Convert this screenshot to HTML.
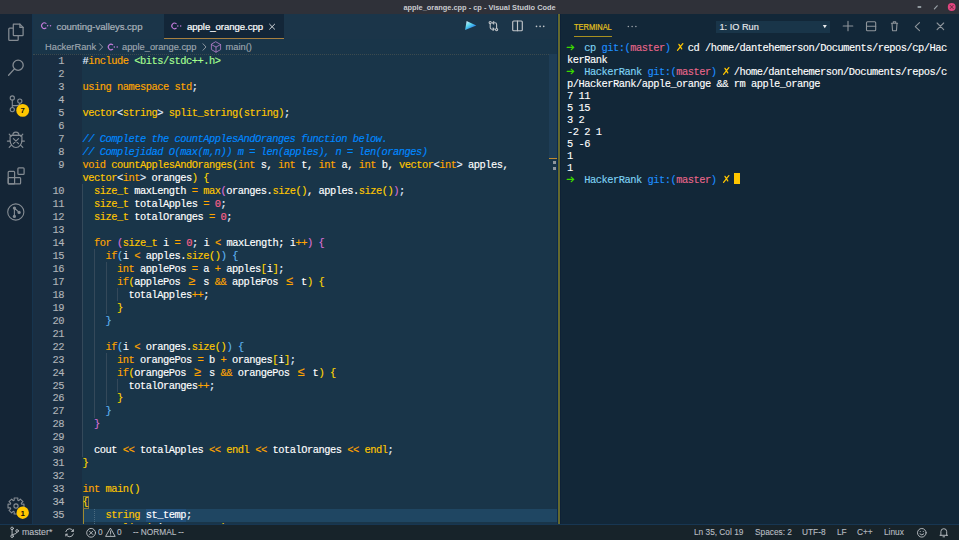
<!DOCTYPE html>
<html><head><meta charset="utf-8"><style>
*{margin:0;padding:0;box-sizing:border-box}
html,body{width:959px;height:540px;overflow:hidden;background:#193549}
body{position:relative;font-family:"Liberation Sans",sans-serif}
.abs{position:absolute}
#title{left:0;top:0;width:959px;height:14px;background:#2F3139}
#titletxt{left:0;top:0;width:959px;height:14px;text-align:center;color:#C9CBCF;font-size:7.4px;font-weight:bold;line-height:16px}
#act{left:0;top:14px;width:32px;height:510px;background:#142536;box-shadow:1px 0 0 #16344E}
#gutter{left:33px;top:54px;width:49px;height:470px;background:#192E42}
#tabs{left:33px;top:14px;width:526px;height:25px;background:#1B3549}
.tab{top:14px;height:25px;color:#A9B2BA;font-size:9.6px;letter-spacing:-0.05px;line-height:25px;white-space:pre;-webkit-text-stroke:0.2px currentColor}
#tab2{left:164px;width:120px;background:#132638;color:#FFFFFF}
#tab2b{left:164px;top:38px;width:120px;height:1px;background:#A88040}
#bc{left:45px;top:40px;height:14px;color:#9EA7AF;font-size:9.3px;line-height:14px;white-space:pre;-webkit-text-stroke:0.15px currentColor}
.ln{position:absolute;left:33px;width:31px;text-align:right;height:13px;color:#B0B4B8;font-family:"Liberation Mono",monospace;font-size:10.4px;letter-spacing:-0.484px;line-height:13px;-webkit-text-stroke:0.15px #B0B4B8}
.cl{position:absolute;left:82.5px;height:13px;font-family:"Liberation Mono",monospace;font-size:10.4px;letter-spacing:-0.484px;line-height:13px;white-space:pre}
.cl span{-webkit-text-stroke:0.15px currentColor}
.cm{color:#0088FF;font-style:italic}
#term{left:560px;top:14px;width:399px;height:510px;background:#122738}
#tborder{left:558px;top:14px;width:2px;height:510px;background:#64692F;box-shadow:-1px 0 0 #0B2A4E,1px 0 0 #0E2136}
.tl{position:absolute;left:567px;height:12px;font-family:"Liberation Mono",monospace;font-size:10.4px;letter-spacing:-0.484px;line-height:12px;white-space:pre}
.tl span{-webkit-text-stroke:0.12px currentColor}
#status{left:0;top:524px;width:959px;height:16px;background:#17232A;border-top:1px solid #173652}
.st{top:524px;height:16px;line-height:17px;font-size:8.3px;color:#B9BEC3;white-space:pre;-webkit-text-stroke:0.1px currentColor}
</style></head><body>
<div id="title" class="abs"></div>
<div id="titletxt" class="abs">apple_orange.cpp - cp - Visual Studio Code</div>
<div id="act" class="abs"></div>
<div id="tabs" class="abs"></div>
<div id="tab2" class="abs tab"></div>
<div class="abs tab" style="left:56.5px">counting-valleys.cpp</div>
<div class="abs tab" style="left:187px;color:#fff">apple_orange.cpp</div>
<div id="tab2b" class="abs"></div>
<div id="bc" class="abs"><span class="abs" style="left:0">HackerRank</span><span class="abs" style="left:77px">apple_orange.cpp</span><span class="abs" style="left:180.5px">main()</span></div>
<div id="gutter" class="abs"></div>
<div class="abs" style="left:33px;top:54px;width:516px;height:1px;border-top:1px dotted #3b4a4e"></div>
<div class="abs" style="left:82.5px;top:508.51px;width:476px;height:13px;background:#1F4662"></div>
<div class="abs" style="left:145.8px;top:508.51px;width:40.3px;height:13px;background:#22507A"></div>
<div class="abs" style="left:82px;top:183.86px;width:1px;height:272.71999999999997px;background:#34495A;"></div><div class="abs" style="left:94px;top:248.79px;width:1px;height:168.83px;background:#34495A;"></div><div class="abs" style="left:106px;top:261.78px;width:1px;height:51.950000000000045px;background:#34495A;"></div><div class="abs" style="left:106px;top:352.68px;width:1px;height:51.95999999999998px;background:#34495A;"></div><div class="abs" style="left:117px;top:287.75px;width:1px;height:13.0px;background:#34495A;"></div><div class="abs" style="left:117px;top:378.65px;width:1px;height:13.0px;background:#34495A;"></div>
<div class="abs" style="left:82.5px;top:495.52px;width:6px;height:13px;border:1px solid #8a7a3a"></div>
<div class="abs" style="left:83px;top:508.51px;width:1px;height:15px;background:#A08A30"></div>
<div class="abs" style="left:94px;top:508.51px;width:0;height:15px;border-left:1px dotted #4a6a80"></div>
<div class="ln" style="top:54.85px">1</div>
<div class="cl" style="top:54.85px"><span style="color:#E1EFFF">#</span><span style="color:#FFA500">include</span><span style="color:#FFFFFF"> </span><span style="color:#A5FF90">&lt;bits/stdc++.h&gt;</span></div>
<div class="ln" style="top:67.83999999999999px">2</div>
<div class="cl" style="top:67.83999999999999px"></div>
<div class="ln" style="top:80.82px">3</div>
<div class="cl" style="top:80.82px"><span style="color:#FFA500">using</span><span style="color:#FFFFFF"> </span><span style="color:#FFA500">namespace</span><span style="color:#FFFFFF"> </span><span style="color:#FFA500">std</span><span style="color:#E1EFFF">;</span></div>
<div class="ln" style="top:93.80999999999999px">4</div>
<div class="cl" style="top:93.80999999999999px"></div>
<div class="ln" style="top:106.78999999999999px">5</div>
<div class="cl" style="top:106.78999999999999px"><span style="color:#FFC600">vector</span><span style="color:#E1EFFF">&lt;</span><span style="color:#FFC600">string</span><span style="color:#E1EFFF">&gt;</span><span style="color:#FFFFFF"> </span><span style="color:#FFC600">split_string</span><span style="color:#FFD700">(</span><span style="color:#FFC600">string</span><span style="color:#FFD700">)</span><span style="color:#E1EFFF">;</span></div>
<div class="ln" style="top:119.78px">6</div>
<div class="cl" style="top:119.78px"></div>
<div class="ln" style="top:132.76999999999998px">7</div>
<div class="cl" style="top:132.76999999999998px"><span class="cm">// Complete the countApplesAndOranges function below.</span></div>
<div class="ln" style="top:145.75px">8</div>
<div class="cl" style="top:145.75px"><span class="cm">// Complejidad O(max(m,n)) m = len(apples), n = len(oranges)</span></div>
<div class="ln" style="top:158.73999999999998px">9</div>
<div class="cl" style="top:158.73999999999998px"><span style="color:#FFA500">void</span><span style="color:#FFFFFF"> </span><span style="color:#FFC600">countApplesAndOranges</span><span style="color:#FFD700">(</span><span style="color:#FFA500">int</span><span style="color:#FFFFFF"> s, </span><span style="color:#FFA500">int</span><span style="color:#FFFFFF"> t, </span><span style="color:#FFA500">int</span><span style="color:#FFFFFF"> a, </span><span style="color:#FFA500">int</span><span style="color:#FFFFFF"> b, </span><span style="color:#FFC600">vector</span><span style="color:#E1EFFF">&lt;</span><span style="color:#FFA500">int</span><span style="color:#E1EFFF">&gt;</span><span style="color:#FFFFFF"> apples,</span></div>
<div class="cl" style="top:171.72px"><span style="color:#FFC600">vector</span><span style="color:#E1EFFF">&lt;</span><span style="color:#FFA500">int</span><span style="color:#E1EFFF">&gt;</span><span style="color:#FFFFFF"> oranges</span><span style="color:#FFD700">)</span><span style="color:#FFFFFF"> </span><span style="color:#FFD700">{</span></div>
<div class="ln" style="top:184.71px">10</div>
<div class="cl" style="top:184.71px"><span style="color:#FFFFFF">  </span><span style="color:#FFC600">size_t</span><span style="color:#FFFFFF"> maxLength </span><span style="color:#FFA500">=</span><span style="color:#FFFFFF"> </span><span style="color:#FFC600">max</span><span style="color:#DA70D6">(</span><span style="color:#FFFFFF">oranges.</span><span style="color:#FFC600">size</span><span style="color:#FFD700">()</span><span style="color:#FFFFFF">, apples.</span><span style="color:#FFC600">size</span><span style="color:#FFD700">()</span><span style="color:#DA70D6">)</span><span style="color:#E1EFFF">;</span></div>
<div class="ln" style="top:197.7px">11</div>
<div class="cl" style="top:197.7px"><span style="color:#FFFFFF">  </span><span style="color:#FFC600">size_t</span><span style="color:#FFFFFF"> totalApples </span><span style="color:#FFA500">=</span><span style="color:#FFFFFF"> </span><span style="color:#FF628C">0</span><span style="color:#E1EFFF">;</span></div>
<div class="ln" style="top:210.68px">12</div>
<div class="cl" style="top:210.68px"><span style="color:#FFFFFF">  </span><span style="color:#FFC600">size_t</span><span style="color:#FFFFFF"> totalOranges </span><span style="color:#FFA500">=</span><span style="color:#FFFFFF"> </span><span style="color:#FF628C">0</span><span style="color:#E1EFFF">;</span></div>
<div class="ln" style="top:223.67px">13</div>
<div class="cl" style="top:223.67px"></div>
<div class="ln" style="top:236.65px">14</div>
<div class="cl" style="top:236.65px"><span style="color:#FFFFFF">  </span><span style="color:#FFA500">for</span><span style="color:#FFFFFF"> </span><span style="color:#DA70D6">(</span><span style="color:#FFC600">size_t</span><span style="color:#FFFFFF"> i </span><span style="color:#FFA500">=</span><span style="color:#FFFFFF"> </span><span style="color:#FF628C">0</span><span style="color:#E1EFFF">;</span><span style="color:#FFFFFF"> i </span><span style="color:#FFA500">&lt;</span><span style="color:#FFFFFF"> maxLength; i</span><span style="color:#FFA500">++</span><span style="color:#DA70D6">)</span><span style="color:#FFFFFF"> </span><span style="color:#DA70D6">{</span></div>
<div class="ln" style="top:249.64px">15</div>
<div class="cl" style="top:249.64px"><span style="color:#FFFFFF">    </span><span style="color:#FFA500">if</span><span style="color:#5FB4F0">(</span><span style="color:#FFFFFF">i </span><span style="color:#FFA500">&lt;</span><span style="color:#FFFFFF"> apples.</span><span style="color:#FFC600">size</span><span style="color:#FFD700">()</span><span style="color:#5FB4F0">)</span><span style="color:#FFFFFF"> </span><span style="color:#5FB4F0">{</span></div>
<div class="ln" style="top:262.63px">16</div>
<div class="cl" style="top:262.63px"><span style="color:#FFFFFF">      </span><span style="color:#FFA500">int</span><span style="color:#FFFFFF"> applePos </span><span style="color:#FFA500">=</span><span style="color:#FFFFFF"> a </span><span style="color:#FFA500">+</span><span style="color:#FFFFFF"> apples</span><span style="color:#FFD700">[</span><span style="color:#FFFFFF">i</span><span style="color:#FFD700">]</span><span style="color:#E1EFFF">;</span></div>
<div class="ln" style="top:275.61px">17</div>
<div class="cl" style="top:275.61px"><span style="color:#FFFFFF">      </span><span style="color:#FFA500">if</span><span style="color:#FFD700">(</span><span style="color:#FFFFFF">applePos </span><span style="color:#FFA500;display:inline-block;width:11.514px;height:13px;text-align:center;font-size:12.5px;letter-spacing:0;vertical-align:top;line-height:13px">≥</span><span style="color:#FFFFFF"> s </span><span style="color:#FFA500">&amp;&amp;</span><span style="color:#FFFFFF"> applePos </span><span style="color:#FFA500;display:inline-block;width:11.514px;height:13px;text-align:center;font-size:12.5px;letter-spacing:0;vertical-align:top;line-height:13px">≤</span><span style="color:#FFFFFF"> t</span><span style="color:#FFD700">)</span><span style="color:#FFFFFF"> </span><span style="color:#FFD700">{</span></div>
<div class="ln" style="top:288.6px">18</div>
<div class="cl" style="top:288.6px"><span style="color:#FFFFFF">        totalApples</span><span style="color:#FFA500">++</span><span style="color:#E1EFFF">;</span></div>
<div class="ln" style="top:301.58000000000004px">19</div>
<div class="cl" style="top:301.58000000000004px"><span style="color:#FFFFFF">      </span><span style="color:#FFD700">}</span></div>
<div class="ln" style="top:314.57000000000005px">20</div>
<div class="cl" style="top:314.57000000000005px"><span style="color:#FFFFFF">    </span><span style="color:#5FB4F0">}</span></div>
<div class="ln" style="top:327.56px">21</div>
<div class="cl" style="top:327.56px"></div>
<div class="ln" style="top:340.54px">22</div>
<div class="cl" style="top:340.54px"><span style="color:#FFFFFF">    </span><span style="color:#FFA500">if</span><span style="color:#5FB4F0">(</span><span style="color:#FFFFFF">i </span><span style="color:#FFA500">&lt;</span><span style="color:#FFFFFF"> oranges.</span><span style="color:#FFC600">size</span><span style="color:#FFD700">()</span><span style="color:#5FB4F0">)</span><span style="color:#FFFFFF"> </span><span style="color:#5FB4F0">{</span></div>
<div class="ln" style="top:353.53000000000003px">23</div>
<div class="cl" style="top:353.53000000000003px"><span style="color:#FFFFFF">      </span><span style="color:#FFA500">int</span><span style="color:#FFFFFF"> orangePos </span><span style="color:#FFA500">=</span><span style="color:#FFFFFF"> b </span><span style="color:#FFA500">+</span><span style="color:#FFFFFF"> oranges</span><span style="color:#FFD700">[</span><span style="color:#FFFFFF">i</span><span style="color:#FFD700">]</span><span style="color:#E1EFFF">;</span></div>
<div class="ln" style="top:366.51000000000005px">24</div>
<div class="cl" style="top:366.51000000000005px"><span style="color:#FFFFFF">      </span><span style="color:#FFA500">if</span><span style="color:#FFD700">(</span><span style="color:#FFFFFF">orangePos </span><span style="color:#FFA500;display:inline-block;width:11.514px;height:13px;text-align:center;font-size:12.5px;letter-spacing:0;vertical-align:top;line-height:13px">≥</span><span style="color:#FFFFFF"> s </span><span style="color:#FFA500">&amp;&amp;</span><span style="color:#FFFFFF"> orangePos </span><span style="color:#FFA500;display:inline-block;width:11.514px;height:13px;text-align:center;font-size:12.5px;letter-spacing:0;vertical-align:top;line-height:13px">≤</span><span style="color:#FFFFFF"> t</span><span style="color:#FFD700">)</span><span style="color:#FFFFFF"> </span><span style="color:#FFD700">{</span></div>
<div class="ln" style="top:379.5px">25</div>
<div class="cl" style="top:379.5px"><span style="color:#FFFFFF">        totalOranges</span><span style="color:#FFA500">++</span><span style="color:#E1EFFF">;</span></div>
<div class="ln" style="top:392.49px">26</div>
<div class="cl" style="top:392.49px"><span style="color:#FFFFFF">      </span><span style="color:#FFD700">}</span></div>
<div class="ln" style="top:405.47px">27</div>
<div class="cl" style="top:405.47px"><span style="color:#FFFFFF">    </span><span style="color:#5FB4F0">}</span></div>
<div class="ln" style="top:418.46000000000004px">28</div>
<div class="cl" style="top:418.46000000000004px"><span style="color:#FFFFFF">  </span><span style="color:#DA70D6">}</span></div>
<div class="ln" style="top:431.44px">29</div>
<div class="cl" style="top:431.44px"></div>
<div class="ln" style="top:444.43px">30</div>
<div class="cl" style="top:444.43px"><span style="color:#FFFFFF">  cout </span><span style="color:#FFA500">&lt;&lt;</span><span style="color:#FFFFFF"> totalApples </span><span style="color:#FFA500">&lt;&lt;</span><span style="color:#FFFFFF"> </span><span style="color:#FFC600">endl</span><span style="color:#FFFFFF"> </span><span style="color:#FFA500">&lt;&lt;</span><span style="color:#FFFFFF"> totalOranges </span><span style="color:#FFA500">&lt;&lt;</span><span style="color:#FFFFFF"> </span><span style="color:#FFC600">endl</span><span style="color:#E1EFFF">;</span></div>
<div class="ln" style="top:457.42px">31</div>
<div class="cl" style="top:457.42px"><span style="color:#FFD700">}</span></div>
<div class="ln" style="top:470.40000000000003px">32</div>
<div class="cl" style="top:470.40000000000003px"></div>
<div class="ln" style="top:483.39000000000004px">33</div>
<div class="cl" style="top:483.39000000000004px"><span style="color:#FFA500">int</span><span style="color:#FFFFFF"> </span><span style="color:#FFC600">main</span><span style="color:#FFD700">()</span></div>
<div class="ln" style="top:496.37px">34</div>
<div class="cl" style="top:496.37px"><span style="color:#FFD700">{</span></div>
<div class="ln" style="top:509.36px">35</div>
<div class="cl" style="top:509.36px"><span style="color:#FFFFFF">    </span><span style="color:#FFC600">string</span><span style="color:#FFFFFF"> st_temp</span><span style="color:#E1EFFF">;</span></div>
<div class="ln" style="top:522.35px">36</div>
<div class="cl" style="top:522.35px"><span style="color:#FFFFFF">    </span><span style="color:#FFC600">getline</span><span style="color:#FFD700">(</span><span style="color:#FFFFFF">cin, st_temp</span><span style="color:#FFD700">)</span><span style="color:#E1EFFF">;</span></div>
<div class="abs" style="left:549px;top:54px;width:9px;height:104px;background:#1E3D56"></div>
<div class="abs" style="left:549px;top:157.5px;width:9px;height:1.5px;background:#C08A30"></div>
<div class="abs" style="left:552.5px;top:160.5px;width:3.5px;height:3.5px;background:#8f979e"></div>
<div class="abs" style="left:552.5px;top:166.5px;width:3.5px;height:3.5px;background:#8f979e"></div>
<div id="term" class="abs"></div>
<div id="tborder" class="abs"></div>
<div class="abs" style="left:574px;top:14.5px;height:25px;line-height:25px;color:#E6C21C;font-size:8.7px;-webkit-text-stroke:0.2px #E6C21C;transform:scaleX(0.86);transform-origin:0 0">TERMINAL</div>
<div class="abs" style="left:574px;top:36px;width:38px;height:1px;background:#A89020"></div>
<div class="abs" style="left:716px;top:21px;width:114px;height:12px;background:#193549"></div>
<div class="abs" style="left:719.5px;top:21px;height:12px;line-height:13px;color:#E8EAEC;font-size:9.2px;-webkit-text-stroke:0.15px currentColor">1: IO Run</div>
<div class="tl" style="top:41.5px"><span style="color:#3AD900">   </span><span style="color:#7FD4F5">cp </span><span style="color:#1E8FFF">git:(</span><span style="color:#E8668A">master</span><span style="color:#1E8FFF">)</span><span style="color:#FFC600">   </span><span style="color:#FFFFFF">cd /home/dantehemerson/Documents/repos/cp/Hac</span></div>
<div class="tl" style="top:53.5px"><span style="color:#FFFFFF">kerRank</span></div>
<div class="tl" style="top:65.5px"><span style="color:#3AD900">   </span><span style="color:#7FD4F5">HackerRank </span><span style="color:#1E8FFF">git:(</span><span style="color:#E8668A">master</span><span style="color:#1E8FFF">)</span><span style="color:#FFC600">   </span><span style="color:#FFFFFF">/home/dantehemerson/Documents/repos/c</span></div>
<div class="tl" style="top:77.5px"><span style="color:#FFFFFF">p/HackerRank/apple_orange &amp;&amp; rm apple_orange</span></div>
<div class="tl" style="top:89.5px"><span style="color:#FFFFFF">7 11</span></div>
<div class="tl" style="top:101.5px"><span style="color:#FFFFFF">5 15</span></div>
<div class="tl" style="top:113.5px"><span style="color:#FFFFFF">3 2</span></div>
<div class="tl" style="top:125.5px"><span style="color:#FFFFFF">-2 2 1</span></div>
<div class="tl" style="top:137.5px"><span style="color:#FFFFFF">5 -6</span></div>
<div class="tl" style="top:149.5px"><span style="color:#FFFFFF">1</span></div>
<div class="tl" style="top:161.5px"><span style="color:#FFFFFF">1</span></div>
<div class="tl" style="top:173.5px"><span style="color:#3AD900">   </span><span style="color:#7FD4F5">HackerRank </span><span style="color:#1E8FFF">git:(</span><span style="color:#E8668A">master</span><span style="color:#1E8FFF">)</span><span style="color:#FFC600">   </span></div>
<div class="abs" style="left:734px;top:173px;width:6px;height:11px;background:#FFC600"></div>
<div id="status" class="abs"></div>
<div class="abs st" style="left:22px;font-size:8.8px">master*</div>
<div class="abs st" style="left:98px">0</div>
<div class="abs st" style="left:117px">0</div>
<div class="abs st" style="left:133px">-- NORMAL --</div>
<div class="abs st" style="left:694px">Ln 35, Col 19</div>
<div class="abs st" style="left:755px">Spaces: 2</div>
<div class="abs st" style="left:802px">UTF-8</div>
<div class="abs st" style="left:837px">LF</div>
<div class="abs st" style="left:857px">C++</div>
<div class="abs st" style="left:884px">Linux</div>
<svg class="abs" style="left:0;top:0" width="959" height="540" viewBox="0 0 959 540" fill="none" stroke-linecap="round" stroke-linejoin="round">
<path d="M567.2 47.4 H573.6 M571.2 45.1 L573.8 47.4 L571.2 49.699999999999996" stroke="#3AD900" stroke-width="1.2"/><path d="M567.2 71.4 H573.6 M571.2 69.10000000000001 L573.8 71.4 L571.2 73.7" stroke="#3AD900" stroke-width="1.2"/><path d="M567.2 179.4 H573.6 M571.2 177.1 L573.8 179.4 L571.2 181.70000000000002" stroke="#3AD900" stroke-width="1.2"/>
<path d="M677.50 50.30 L682.80 43.60 M678.90 44.40 L681.70 48.90" stroke="#FFC600" stroke-width="1.25"/><path d="M723.56 74.30 L728.86 67.60 M724.96 68.40 L727.76 72.90" stroke="#FFC600" stroke-width="1.25"/><path d="M723.56 182.30 L728.86 175.60 M724.96 176.40 L727.76 180.90" stroke="#FFC600" stroke-width="1.25"/>
<!-- window buttons -->
<rect x="917.6" y="6.1" width="3.6" height="1.8" fill="#9AA3A9"/>
<path d="M934.4 8.8 L937.2 5.8" stroke="#9AA3A9" stroke-width="1.2"/>
<circle cx="951.7" cy="7" r="3.9" fill="#E2457F"/>
<path d="M950.2 5.4 L953.2 8.6 M953.2 5.4 L950.2 8.6" stroke="#5a2a3a" stroke-width="0.9"/>
<!-- explorer -->
<g stroke="#858C93" stroke-width="1.25">
<path d="M13.3 24.2 h6.6 l3.2 3.2 v7.6 q0 0.7 -0.7 0.7 h-8.4 q-0.7 0 -0.7 -0.7 v-10.1 q0 -0.7 0.7 -0.7 z"/>
<path d="M19.9 24.2 v3.2 h3.2"/>
<path d="M12.6 28 h-2.9 q-0.9 0 -0.9 0.9 v10.6 q0 0.9 0.9 0.9 h7.6 q0.9 0 0.9 -0.9 v-3.6"/>
</g>
<!-- search -->
<g stroke="#858C93" stroke-width="1.3">
<circle cx="18.1" cy="65.2" r="5.1"/>
<path d="M14.4 68.9 L8.6 75.3"/>
</g>
<!-- scm -->
<g stroke="#858C93" stroke-width="1.1">
<circle cx="12.3" cy="98" r="2.1"/>
<circle cx="19.8" cy="101.1" r="2.1"/>
<circle cx="12.3" cy="109.6" r="2.1"/>
<path d="M12.3 100.1 V107.5 M12.3 105.6 H16.5 Q19.8 105.6 19.8 103.2"/>
</g>
<circle cx="22.7" cy="110.4" r="6.4" fill="#FFC600"/>
<text x="22.7" y="113.4" font-family="Liberation Sans" font-weight="bold" font-size="7.6" fill="#111" text-anchor="middle">7</text>
<!-- debug -->
<g stroke="#858C93" stroke-width="1.2">
<path d="M12.8 135.4 A3.1 3.3 0 0 1 19.0 135.4 Z"/>
<path d="M11.2 135.4 H20.8 Q21.9 135.4 21.9 137 V140.5 A5.9 7 0 0 1 10.1 140.5 V137 Q10.1 135.4 11.2 135.4 Z"/>
<path d="M13.4 138.6 L18.5 143.6 M18.5 138.6 L13.4 143.6"/>
<path d="M9.2 134.2 L11.2 136.4 M22.8 134.2 L20.8 136.4 M7.4 141.1 H10.1 M21.9 141.1 H24.4 M9.2 147.4 L11.4 145.2 M22.8 147.4 L20.6 145.2"/>
</g>
<!-- extensions -->
<g stroke="#858C93" stroke-width="1.2">
<rect x="8.2" y="171.3" width="6.4" height="12.5" rx="0.9"/>
<rect x="8.2" y="177.6" width="12.4" height="6.2" rx="0.9"/>
<rect x="17.9" y="167.9" width="6.2" height="6.4" rx="0.9"/>
</g>
<!-- git graph -->
<g stroke="#858C93" stroke-width="1.1">
<circle cx="15.8" cy="212" r="8.1"/>
<path d="M14.4 208 V216.4 M14.4 208 L19.1 212.4"/>
</g>
<g fill="#858C93"><circle cx="14.4" cy="208" r="1.6"/><circle cx="19.1" cy="212.4" r="1.6"/><circle cx="14.4" cy="216.4" r="1.6"/></g>
<!-- gear -->
<g stroke="#858C93" stroke-width="1.1">
<path d="M23.98 504.13 L23.98 507.87 L21.73 507.77 L21.31 508.80 L22.97 510.32 L20.32 512.97 L18.80 511.31 L17.77 511.73 L17.87 513.98 L14.13 513.98 L14.23 511.73 L13.20 511.31 L11.68 512.97 L9.03 510.32 L10.69 508.80 L10.27 507.77 L8.02 507.87 L8.02 504.13 L10.27 504.23 L10.69 503.20 L9.03 501.68 L11.68 499.03 L13.20 500.69 L14.23 500.27 L14.13 498.02 L17.87 498.02 L17.77 500.27 L18.80 500.69 L20.32 499.03 L22.97 501.68 L21.31 503.20 L21.73 504.23 Z"/>
<circle cx="16" cy="506" r="2.1"/>
</g>
<circle cx="22.7" cy="512.7" r="6.2" fill="#FFC600"/>
<text x="22.7" y="515.6" font-family="Liberation Sans" font-weight="bold" font-size="8" fill="#111" text-anchor="middle">1</text>
<!-- tab icons -->
<path d="M46.00 23.40 A2.8 2.8 0 1 0 46.00 28.00" stroke="#C37BDB" stroke-width="1.1"/>
<circle cx="47.60" cy="25.70" r="0.75" fill="#C37BDB"/><circle cx="50.50" cy="25.70" r="0.75" fill="#C37BDB"/>
<path d="M176.20 23.60 A2.8 2.8 0 1 0 176.20 28.20" stroke="#C37BDB" stroke-width="1.1"/>
<circle cx="177.80" cy="25.90" r="0.75" fill="#C37BDB"/><circle cx="180.70" cy="25.90" r="0.75" fill="#C37BDB"/>
<path d="M269.6 24.2 L274.6 29.2 M274.6 24.2 L269.6 29.2" stroke="#D0D4D8" stroke-width="1"/>
<!-- breadcrumbs -->
<path d="M99.6 43.8 L102.6 47 L99.6 50.2 M203 43.8 L206 47 L203 50.2" stroke="#9AA2AA" stroke-width="0.9"/>
<path d="M112.70 44.70 A2.8 2.8 0 1 0 112.70 49.30" stroke="#C37BDB" stroke-width="1.1"/>
<circle cx="114.30" cy="47.00" r="0.75" fill="#C37BDB"/><circle cx="117.20" cy="47.00" r="0.75" fill="#C37BDB"/>
<g stroke="#B07CC8" stroke-width="0.85">
<path d="M216 41.9 L220.6 44.5 V49.6 L216 52.2 L211.4 49.6 V44.5 Z M211.4 44.5 L216 47.1 L220.6 44.5 M216 47.1 V52.2"/>
</g>
<!-- editor actions -->
<defs><linearGradient id="rg" x1="0.2" y1="0" x2="0.9" y2="0.9"><stop offset="0" stop-color="#D0E8F6"/><stop offset="0.4" stop-color="#58D6EE"/><stop offset="0.75" stop-color="#2E8EE8"/><stop offset="1" stop-color="#0A5CE0"/></linearGradient></defs>
<path d="M466.6 20.9 L476.3 25.6 L465.1 29.9 Z" fill="url(#rg)"/>
<g stroke="#C0C4C8" stroke-width="1.1">
<circle cx="490.2" cy="22.6" r="1.1"/><circle cx="496.6" cy="29.6" r="1.1"/>
<path d="M490.2 23.8 V27.6 Q490.2 29.2 491.8 29.2 H493.6 M496.6 28.4 V24.4 Q496.6 22.8 495 22.8 H493.2"/>
<path d="M493 28 L494.2 29.2 L493 30.4 M493.8 21.6 L492.6 22.8 L493.8 24"/>
</g>
<g stroke="#C0C4C8" stroke-width="1.15">
<rect x="512.7" y="21" width="9.6" height="9.7" rx="1"/>
<path d="M517.5 21 V30.7"/>
</g>
<g fill="#C0C4C8"><circle cx="536.5" cy="26.3" r="0.85"/><circle cx="540.1" cy="26.3" r="0.85"/><circle cx="543.7" cy="26.3" r="0.85"/></g>
<g fill="#A3A9AF"><circle cx="628.3" cy="26.5" r="0.75"/><circle cx="632.1" cy="26.5" r="0.75"/><circle cx="635.9" cy="26.5" r="0.75"/></g>
<!-- terminal header icons -->
<g stroke="#8E959B" stroke-width="1.1">
<path d="M848 21.2 V30.8 M843.2 26 H852.8"/>
<rect x="866.5" y="21.7" width="9.2" height="9" rx="1"/>
<path d="M866.5 26.2 H875.7"/>
<path d="M891.4 23.2 H897.6 M892 23.4 L892.5 30.3 Q892.6 30.8 893.1 30.8 H895.9 Q896.4 30.8 896.5 30.3 L897 23.4 M893.3 23 V21.7 H895.7 V23"/>
<path d="M919.5 22.6 L915.3 26.6 L919.5 30.6"/>
<path d="M937.1 23 L943.7 29.6 M943.7 23 L937.1 29.6"/>
</g>
<path d="M822.8 24.9 H826.8 L824.8 28.3 Z" fill="#E8EAEC"/>
<!-- status bar icons -->
<g stroke="#BFC4C8" stroke-width="0.9">
<circle cx="12.1" cy="528.4" r="1.3"/><circle cx="17.1" cy="530.9" r="1.3"/><circle cx="12.1" cy="536.2" r="1.3"/>
<path d="M12.1 529.7 V534.9 M17.1 532.2 Q17.1 534 12.8 534.6"/>
<path d="M65.8 531.6 A3.9 3.9 0 0 1 73.2 531.2 M73.4 533.9 A3.9 3.9 0 0 1 66 534.3 M73.4 529.6 V531.4 H71.6 M65.8 536 V534.2 H67.6"/>
<circle cx="91.1" cy="532.8" r="4.4"/>
<path d="M89.4 531.1 L92.8 534.5 M92.8 531.1 L89.4 534.5"/>
<path d="M110.6 528.4 L115.2 536.4 H106 Z M110.6 531 V533.6 M110.6 534.9 V535"/>
<circle cx="921.8" cy="532.8" r="4.3"/>
<path d="M919.9 534 Q921.8 536 923.7 534 M920.3 531.4 V531.5 M923.3 531.4 V531.5"/>
<path d="M940 535.3 H947.6 M940.9 535.3 V531.6 A2.9 2.9 0 0 1 946.7 531.6 V535.3 M943 536.8 H944.6"/>
</g>
</svg>
</body></html>
